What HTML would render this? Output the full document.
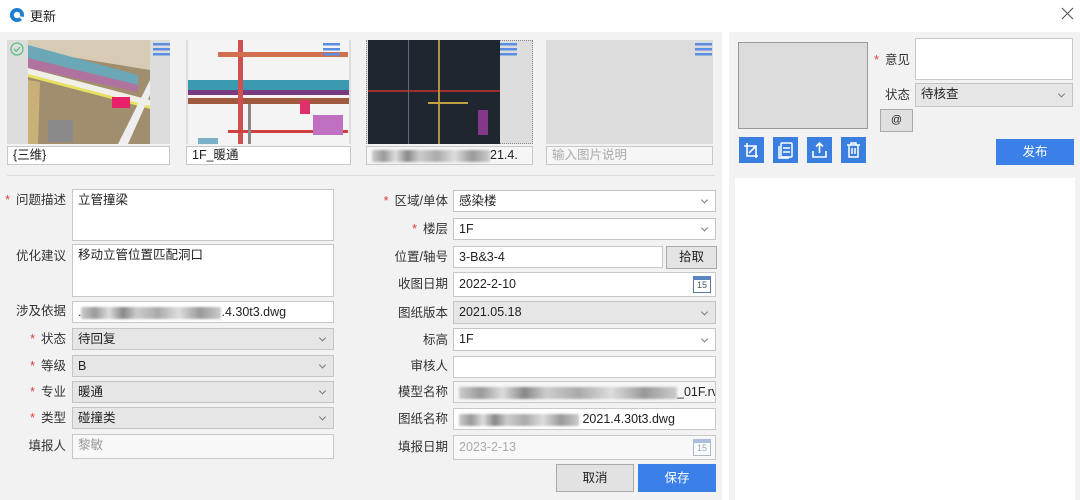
<!DOCTYPE html>
<html><head><meta charset="utf-8"><style>
*{box-sizing:border-box;margin:0;padding:0}
body{width:1080px;height:500px;background:#fff;font-family:"Liberation Sans","Noto Sans CJK SC",sans-serif;font-size:12.5px;color:#222;position:relative;overflow:hidden}
.a{position:absolute}
.inp{position:absolute;background:#fff;border:1px solid #c8c8c8;padding:2px 5px;line-height:16px;white-space:nowrap;overflow:hidden}
.sel{position:absolute;background:#e6e6e6;border:1px solid #c4c4c4;padding:2px 5px;line-height:16px}
.wsel{background:#fff}
.sel:after{content:"";position:absolute;right:8px;top:50%;width:4px;height:4px;border-right:1px solid #777;border-bottom:1px solid #777;transform:translateY(-70%) rotate(45deg)}
.lbl{position:absolute;text-align:right;line-height:20px;color:#333}
.lbl b{color:#e04040;font-weight:normal;margin-right:6px}
.blur{display:inline-block;height:12px;background:linear-gradient(90deg,#ccc,#999 10%,#ddd 20%,#888 30%,#ccc 40%,#aaa 55%,#ddd 70%,#999 85%,#ccc);vertical-align:middle;filter:blur(1px)}
.ib{position:absolute;width:25px;height:26px;background:#3a7fe0}
.cal{position:absolute;right:4px;top:3px;width:18px;height:17px;border:1px solid #5a7aa0;background:#fff;font-size:9px;line-height:11px;text-align:center;color:#456;border-top:4px solid #5a86c0}
</style></head><body>
<svg class="a" style="left:9px;top:7px" width="16" height="16" viewBox="0 0 16 16"><circle cx="8" cy="8" r="7" fill="#1a7fd0"/><circle cx="8" cy="8" r="3.2" fill="#fff"/><path d="M9 9 L15 15 L15 10Z" fill="#fff"/></svg>
<div class="a" style="left:30px;top:6px;font-size:13px">更新</div>
<svg class="a" style="left:1061px;top:7px" width="13" height="13"><path d="M1 1L12 12M12 1L1 12" stroke="#555" stroke-width="1.1"/></svg>

<div class="a" style="left:0;top:32px;width:722px;height:468px;background:#f2f2f2"></div>
<div class="a" style="left:729px;top:32px;width:351px;height:468px;background:#f2f2f2"></div>

<div class="a" style="left:7px;top:40px;width:163px;height:104px;background:#ddd"></div>
<svg class="a" style="left:28px;top:40px" width="122" height="104" viewBox="0 0 122 104">
<rect width="122" height="104" fill="#a08e6e"/>
<polygon points="0,0 122,0 122,30 0,10" fill="#d8cbb5"/>
<polygon points="0,5 110,35 110,45 0,18" fill="#6aa8b8"/>
<polygon points="0,18 110,45 110,52 0,28" fill="#b073a0"/>
<polygon points="0,28 122,60 122,68 0,36" fill="#f0f0e8"/>
<polygon points="0,34 122,66 122,69 0,37" fill="#e8e060"/>
<polygon points="90,104 122,40 122,55 100,104" fill="#eee"/>
<rect x="84" y="57" width="18" height="11" fill="#e8206a"/>
<polygon points="0,40 12,42 10,104 0,104" fill="#c8b078"/>
<rect x="20" y="80" width="25" height="22" fill="#8a8a8a"/>
</svg>
<svg class="a" style="left:10px;top:42px" width="14" height="14"><circle cx="7" cy="7" r="6" fill="none" stroke="#5cc080" stroke-width="1.3"/><path d="M4 7 L6.3 9.3 L10 5" fill="none" stroke="#5cc080" stroke-width="1.3"/></svg>
<div class="inp" style="left:7px;top:146px;width:163px;height:19px;line-height:13px">{三维}</div>

<div class="a" style="left:186px;top:40px;width:165px;height:104px;background:#ddd"></div>
<svg class="a" style="left:188px;top:40px" width="161" height="104" viewBox="0 0 161 104">
<rect width="161" height="104" fill="#f4f4f4"/>
<rect x="0" y="40" width="161" height="10" fill="#3a9ab0"/>
<rect x="0" y="50" width="161" height="5" fill="#7a3a80"/>
<rect x="0" y="58" width="161" height="6" fill="#a05a40"/>
<rect x="50" y="0" width="5" height="104" fill="#d05050"/>
<rect x="30" y="12" width="130" height="5" fill="#d07050"/>
<rect x="40" y="90" width="120" height="3" fill="#d04040"/>
<rect x="60" y="64" width="3" height="40" fill="#888"/>
<rect x="125" y="75" width="30" height="20" fill="#c070c0"/>
<rect x="112" y="60" width="10" height="14" fill="#e0306a"/>
<rect x="10" y="98" width="20" height="6" fill="#7ab0c8"/>
</svg>
<div class="inp" style="left:186px;top:146px;width:165px;height:19px;line-height:13px">1F_暖通</div>

<div class="a" style="left:366px;top:40px;width:167px;height:104px;background:#ddd;border:1px dotted #888"></div>
<svg class="a" style="left:368px;top:40px" width="132" height="104" viewBox="0 0 132 104"><rect width="132" height="104" fill="#1e2630"/>
<rect x="0" y="50" width="132" height="2" fill="#a03030"/><rect x="70" y="0" width="2" height="104" fill="#b09040"/><rect x="60" y="62" width="40" height="2" fill="#c0a040"/><rect x="110" y="70" width="10" height="25" fill="#b040b0" opacity=".7"/><rect x="40" y="0" width="1" height="104" fill="#667"/></svg>
<div class="inp" style="left:366px;top:146px;width:167px;height:19px;line-height:13px;background:#f6f6f6"><span class="blur" style="width:118px"></span>21.4.</div>

<div class="a" style="left:546px;top:40px;width:167px;height:104px;background:#dcdcdc"></div>
<div class="inp" style="left:546px;top:146px;width:167px;height:19px;line-height:13px;color:#aaa;background:#f6f6f6">输入图片说明</div>

<svg class="a" style="left:153px;top:42px" width="18" height="14"><g fill="#5a8ee0"><rect y="1" width="17" height="2.5"/><rect y="6" width="17" height="2.5"/><rect y="11" width="17" height="2.5"/></g></svg>
<svg class="a" style="left:323px;top:42px" width="18" height="14"><g fill="#5a8ee0"><rect y="1" width="17" height="2.5"/><rect y="6" width="17" height="2.5"/><rect y="11" width="17" height="2.5"/></g></svg>
<svg class="a" style="left:500px;top:42px" width="18" height="14"><g fill="#5a8ee0"><rect y="1" width="17" height="2.5"/><rect y="6" width="17" height="2.5"/><rect y="11" width="17" height="2.5"/></g></svg>
<svg class="a" style="left:695px;top:42px" width="18" height="14"><g fill="#5a8ee0"><rect y="1" width="17" height="2.5"/><rect y="6" width="17" height="2.5"/><rect y="11" width="17" height="2.5"/></g></svg>

<div class="a" style="left:7px;top:175px;width:708px;height:1px;background:#ddd"></div>

<div class="lbl" style="left:0;top:190px;width:66px"><b>*</b>问题描述</div>
<div class="inp" style="left:72px;top:189px;width:262px;height:52px;white-space:normal">立管撞梁</div>
<div class="lbl" style="left:0;top:246px;width:66px">优化建议</div>
<div class="inp" style="left:72px;top:244px;width:262px;height:53px">移动立管位置匹配洞口</div>
<div class="lbl" style="left:0;top:301px;width:66px">涉及依据</div>
<div class="inp" style="left:72px;top:301px;width:262px;height:22px">.<span class="blur" style="width:140px"></span>.4.30t3.dwg</div>
<div class="lbl" style="left:0;top:329px;width:66px"><b>*</b>状态</div>
<div class="sel" style="left:72px;top:328px;width:262px;height:22px">待回复</div>
<div class="lbl" style="left:0;top:356px;width:66px"><b>*</b>等级</div>
<div class="sel" style="left:72px;top:355px;width:262px;height:22px">B</div>
<div class="lbl" style="left:0;top:382px;width:66px"><b>*</b>专业</div>
<div class="sel" style="left:72px;top:381px;width:262px;height:22px">暖通</div>
<div class="lbl" style="left:0;top:408px;width:66px"><b>*</b>类型</div>
<div class="sel" style="left:72px;top:407px;width:262px;height:22px">碰撞类</div>
<div class="lbl" style="left:0;top:436px;width:66px">填报人</div>
<div class="inp" style="left:72px;top:434px;width:262px;height:25px;color:#999;background:#f8f8f8">黎敏</div>

<div class="lbl" style="left:360px;top:191px;width:88px"><b>*</b>区域/单体</div>
<div class="sel wsel" style="left:453px;top:190px;width:263px;height:22px">感染楼</div>
<div class="lbl" style="left:360px;top:219px;width:88px"><b>*</b>楼层</div>
<div class="sel wsel" style="left:453px;top:218px;width:263px;height:22px">1F</div>
<div class="lbl" style="left:360px;top:247px;width:88px">位置/轴号</div>
<div class="inp" style="left:453px;top:246px;width:210px;height:22px">3-B&amp;3-4</div>
<div class="a" style="left:666px;top:246px;width:51px;height:23px;background:#e4e4e4;border:1px solid #aaa;text-align:center;line-height:21px">拾取</div>
<div class="lbl" style="left:360px;top:274px;width:88px">收图日期</div>
<div class="inp" style="left:453px;top:272px;width:263px;height:25px;line-height:19px">2022-2-10<div class="cal">15</div></div>
<div class="lbl" style="left:360px;top:303px;width:88px">图纸版本</div>
<div class="sel" style="left:453px;top:301px;width:263px;height:23px">2021.05.18</div>
<div class="lbl" style="left:360px;top:330px;width:88px">标高</div>
<div class="sel wsel" style="left:453px;top:328px;width:263px;height:23px">1F</div>
<div class="lbl" style="left:360px;top:356px;width:88px">审核人</div>
<div class="inp" style="left:453px;top:356px;width:263px;height:22px"></div>
<div class="lbl" style="left:360px;top:382px;width:88px">模型名称</div>
<div class="inp" style="left:453px;top:381px;width:263px;height:22px;background:#f6f6f6"><span class="blur" style="width:218px"></span>_01F.rv</div>
<div class="lbl" style="left:360px;top:409px;width:88px">图纸名称</div>
<div class="inp" style="left:453px;top:408px;width:263px;height:22px"><span class="blur" style="width:120px"></span> 2021.4.30t3.dwg</div>
<div class="lbl" style="left:360px;top:437px;width:88px">填报日期</div>
<div class="inp" style="left:453px;top:435px;width:263px;height:25px;line-height:19px;color:#aaa;background:#f8f8f8">2023-2-13<div class="cal" style="opacity:.5">15</div></div>

<div class="a" style="left:556px;top:464px;width:78px;height:28px;background:#e2e2e2;border:1px solid #aaa;text-align:center;line-height:26px">取消</div>
<div class="a" style="left:638px;top:464px;width:78px;height:28px;background:#3a80e8;color:#fff;text-align:center;line-height:28px">保存</div>

<div class="a" style="left:738px;top:42px;width:130px;height:87px;background:#dcdcdc;border:1px solid #999"></div>
<div class="lbl" style="left:860px;top:50px;width:50px"><b>*</b>意见</div>
<div class="inp" style="left:915px;top:38px;width:158px;height:42px"></div>
<div class="lbl" style="left:860px;top:85px;width:50px">状态</div>
<div class="sel" style="left:915px;top:83px;width:158px;height:24px">待核查</div>
<div class="a" style="left:880px;top:109px;width:33px;height:23px;background:#e0e0e0;border:1px solid #aaa;text-align:center;line-height:21px;font-size:11px">@</div>
<div class="ib" style="left:739px;top:137px"><svg width="25" height="26" viewBox="0 0 25 26" fill="none" stroke="#fff" stroke-width="1.6"><path d="M8 6v13h11M5 9h12v12"/><path d="M10 16l6-6"/></svg></div>
<div class="ib" style="left:773px;top:137px"><svg width="25" height="26" viewBox="0 0 25 26" fill="none" stroke="#fff" stroke-width="1.5"><rect x="8" y="6" width="11" height="14" rx="1"/><path d="M6 9v12h10M10 11h7M10 15h7"/></svg></div>
<div class="ib" style="left:807px;top:137px"><svg width="25" height="26" viewBox="0 0 25 26" fill="none" stroke="#fff" stroke-width="1.6"><path d="M12.5 16V6M9 9.5l3.5-3.5 3.5 3.5M6 14v6h13v-6"/></svg></div>
<div class="ib" style="left:841px;top:137px"><svg width="25" height="26" viewBox="0 0 25 26" fill="none" stroke="#fff" stroke-width="1.5"><path d="M6 8h13M10 8V6h5v2M8 8v12h9V8M11 11v6M14 11v6"/></svg></div>
<div class="a" style="left:996px;top:139px;width:78px;height:26px;background:#3a80e8;color:#fff;text-align:center;line-height:26px">发布</div>
<div class="a" style="left:735px;top:178px;width:340px;height:322px;background:#fff"></div>
</body></html>
